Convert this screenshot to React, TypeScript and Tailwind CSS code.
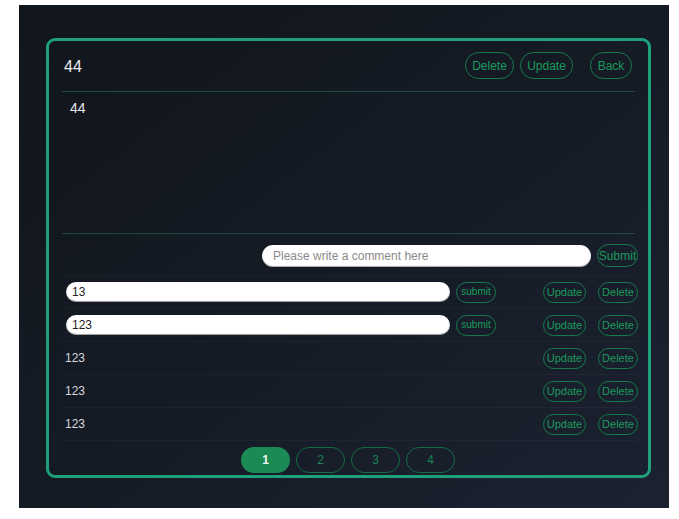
import { useState } from "react";

type Comment = { id: number; text: string; editing: boolean };

const initialComments: Comment[] = [
  { id: 1, text: "13", editing: true },
  { id: 2, text: "123", editing: true },
  { id: 3, text: "123", editing: false },
  { id: 4, text: "123", editing: false },
  { id: 5, text: "123", editing: false },
];

const outlineBtn =
  "rounded-full border border-[#167a4c] text-[#1c9a5c] leading-none hover:bg-[#167a4c]/20";

export default function App() {
  const [comments, setComments] = useState(initialComments);
  const [draft, setDraft] = useState("");
  const [page, setPage] = useState(1);

  return (
    <div className="min-h-screen bg-white px-[19px] pt-[5px] font-['Liberation_Sans',Arial,sans-serif]">
      <div className="h-[503px] w-[650px] bg-gradient-to-br from-[#11151c] via-[#151b25] to-[#1b2230] px-[27px] pt-[33px]">
        <div className="flex h-[440px] w-[605px] flex-col rounded-[9px] border-[3px] border-[#1fa07a] px-[13px]">
          {/* header */}
          <div className="flex items-center border-b border-[#1d4a43] pb-[12px] pt-[11px]">
            <h1 className="ml-[2px] mt-[2px] text-[16px] text-[#e8eaee]">44</h1>
            <div className="ml-auto mr-[3px] flex items-center">
              <button className={`${outlineBtn} h-[27px] w-[49px] text-[12px]`}>Delete</button>
              <button className={`${outlineBtn} ml-[6px] h-[27px] w-[53px] text-[12px]`}>Update</button>
              <button className={`${outlineBtn} ml-[17px] h-[27px] w-[42px] text-[12px]`}>Back</button>
            </div>
          </div>

          {/* body */}
          <div className="h-[142px] border-b border-[#1d4a43] px-[8px] pt-[6px] text-[14px] text-[#e8eaee]">44</div>

          {/* new comment */}
          <div className="-mr-[3px] flex items-center justify-end border-b border-white/[0.03] pb-[8px] pt-[10px]">
            <input
              value={draft}
              onChange={(e) => setDraft(e.target.value)}
              placeholder="Please write a comment here"
              className="h-[22px] w-[329px] rounded-full bg-white px-[11px] text-[12px] text-[#333] shadow-[inset_0_-1px_1px_rgba(0,0,0,0.35)] outline-none placeholder:text-[#8a8a8a]"
            />
            <button className={`${outlineBtn} ml-[6px] h-[23px] w-[41px] text-[12px]`}>Submit</button>
          </div>

          {/* comments */}
          {comments.map((c) => (
            <div key={c.id} className="-mr-[3px] flex h-[33px] items-center border-b border-white/[0.03]">
              {c.editing ? (
                <>
                  <input
                    value={c.text}
                    onChange={(e) =>
                      setComments((prev) => prev.map((p) => (p.id === c.id ? { ...p, text: e.target.value } : p)))
                    }
                    className="ml-[4px] h-[20px] w-[384px] rounded-full bg-white px-[6px] text-[12px] text-[#222] shadow-[inset_0_-1px_1px_rgba(0,0,0,0.4)] outline-none"
                  />
                  <button className={`${outlineBtn} ml-[6px] h-[21px] w-[40px] text-[10px]`}>submit</button>
                </>
              ) : (
                <span className="ml-[3px] text-[12px] text-[#d4d7dc]">{c.text}</span>
              )}
              <div className="ml-auto flex items-center">
                <button className={`${outlineBtn} h-[21px] w-[43px] text-[11px]`}>Update</button>
                <button className={`${outlineBtn} ml-[12px] h-[21px] w-[40px] text-[11px]`}>Delete</button>
              </div>
            </div>
          ))}

          {/* pagination */}
          <div className="-ml-[1px] flex justify-center gap-[6px] pt-[6px]">
            {[1, 2, 3, 4].map((n) => (
              <button
                key={n}
                onClick={() => setPage(n)}
                className={
                  n === page
                    ? "h-[26px] w-[49px] rounded-full bg-[#1b8a55] text-[12px] font-bold text-[#f2f5f3]"
                    : "h-[26px] w-[49px] rounded-full border border-[#156b44] text-[12px] text-[#1a8452]"
                }
              >
                {n}
              </button>
            ))}
          </div>
        </div>
      </div>
    </div>
  );
}
